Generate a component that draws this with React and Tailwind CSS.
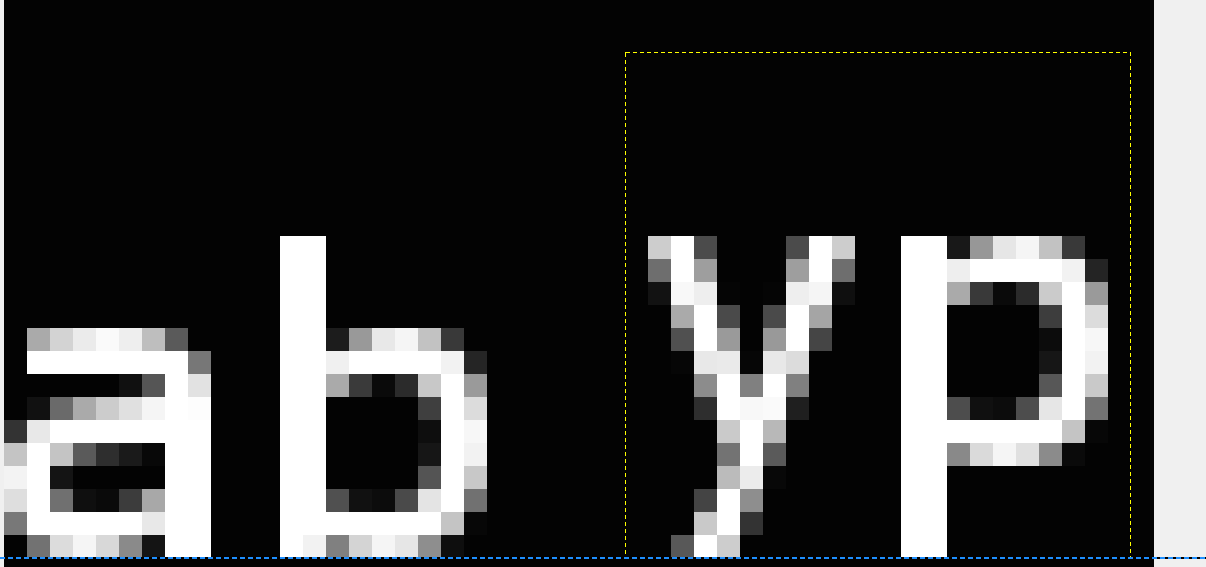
import React from "react";

const CELL = 23;

// zoomed bitmap: each glyph is a block of grey values, one cell per source pixel
const glyphs = [
  {
    col: 0,
    row: 14,
    rows: [
      [0, 170, 211, 235, 250, 238, 190, 90, 0],
      [0, 255, 255, 255, 255, 255, 255, 255, 119],
      [0, 0, 0, 0, 0, 16, 85, 255, 226],
      [0, 17, 106, 170, 204, 224, 245, 255, 253],
      [51, 232, 255, 255, 255, 255, 255, 255, 255],
      [196, 255, 196, 90, 46, 26, 8, 255, 255],
      [243, 255, 20, 0, 0, 0, 0, 255, 255],
      [222, 255, 112, 15, 10, 60, 168, 255, 255],
      [120, 255, 255, 255, 255, 255, 232, 255, 255],
      [0, 114, 220, 245, 216, 138, 20, 255, 255],
    ],
  },
  {
    col: 12,
    row: 10,
    rows: [
      [255, 255],
      [255, 255],
      [255, 255],
      [255, 255],
      [255, 255, 28, 153, 232, 245, 194, 57, 0],
      [255, 255, 240, 255, 255, 255, 255, 242, 37],
      [255, 255, 170, 58, 10, 43, 200, 255, 154],
      [255, 255, 0, 0, 0, 0, 63, 255, 220],
      [255, 255, 0, 0, 0, 0, 14, 255, 247],
      [255, 255, 0, 0, 0, 0, 22, 255, 242],
      [255, 255, 0, 0, 0, 0, 84, 255, 200],
      [255, 255, 80, 17, 12, 74, 228, 255, 113],
      [255, 255, 255, 255, 255, 255, 255, 196, 7],
      [255, 242, 128, 212, 245, 230, 142, 14, 0],
    ],
  },
  {
    col: 28,
    row: 10,
    rows: [
      [205, 255, 75, 0, 0, 0, 75, 255, 205],
      [110, 255, 158, 0, 0, 0, 158, 255, 110],
      [18, 248, 238, 5, 0, 5, 238, 245, 15],
      [0, 170, 255, 74, 0, 74, 255, 165, 0],
      [0, 80, 255, 154, 0, 153, 255, 69, 0],
      [0, 6, 232, 234, 6, 232, 220, 0, 0],
      [0, 0, 140, 255, 128, 255, 128, 0, 0],
      [0, 0, 46, 255, 248, 250, 31, 0, 0],
      [0, 0, 0, 202, 255, 184, 0, 0, 0],
      [0, 0, 0, 115, 255, 90, 0, 0, 0],
      [0, 0, 0, 187, 236, 8, 0, 0, 0],
      [0, 0, 68, 255, 142, 0, 0, 0, 0],
      [0, 0, 201, 255, 51, 0, 0, 0, 0],
      [0, 88, 255, 205, 0, 0, 0, 0, 0],
    ],
  },
  {
    col: 39,
    row: 10,
    rows: [
      [255, 255, 24, 151, 230, 245, 194, 57, 0],
      [255, 255, 238, 255, 255, 255, 255, 242, 36],
      [255, 255, 170, 57, 10, 43, 203, 255, 154],
      [255, 255, 0, 0, 0, 0, 61, 255, 220],
      [255, 255, 0, 0, 0, 0, 12, 255, 247],
      [255, 255, 0, 0, 0, 0, 22, 255, 242],
      [255, 255, 0, 0, 0, 0, 87, 255, 201],
      [255, 255, 77, 16, 12, 77, 230, 255, 115],
      [255, 255, 255, 255, 255, 255, 255, 196, 7],
      [255, 255, 137, 218, 245, 224, 139, 10, 0],
      [255, 255],
      [255, 255],
      [255, 255],
      [255, 255],
    ],
  },
];

const PixelView = () => {
  const cells = [];
  glyphs.forEach((g, gi) => {
    g.rows.forEach((line, ri) => {
      line.forEach((v, ci) => {
        if (!v) return;
        cells.push(
          <rect
            key={`${gi}-${ri}-${ci}`}
            x={(g.col + ci) * CELL}
            y={(g.row + ri) * CELL}
            width={CELL}
            height={CELL}
            fill={`rgb(${v},${v},${v})`}
          />
        );
      });
    });
  });

  return (
    <svg
      width={1150}
      height={552}
      viewBox="0 0 1150 552"
      shapeRendering="crispEdges"
      className="block"
      role="img"
      aria-label="ab yp"
    >
      {cells}
    </svg>
  );
};

const App = () => {
  return (
    <div className="relative flex h-[567px] w-[1206px] overflow-hidden bg-[#f0f0f0]">
      <div className="w-[4px] shrink-0 bg-[#f0f0f0]" />
      <div className="w-[1150px] shrink-0 bg-[#030303] pt-[6px]">
        <PixelView />
      </div>
      <div className="flex-1 bg-[#f0f0f0]" />

      {/* selection box */}
      <svg
        className="absolute left-[625px] top-[52px]"
        width={507}
        height={507}
        shapeRendering="crispEdges"
      >
        <rect
          x={0.5}
          y={0.5}
          width={505}
          height={505}
          fill="none"
          stroke="#ffff00"
          strokeWidth={1}
          strokeDasharray="4 3"
        />
      </svg>

      {/* baseline guide */}
      <div className="absolute left-0 top-[557px] h-[2px] w-full bg-black">
        <svg width={1206} height={2} className="block" shapeRendering="crispEdges">
          <line
            x1={0}
            y1={1}
            x2={1206}
            y2={1}
            stroke="#1e8fff"
            strokeWidth={2}
            strokeDasharray="5 3"
          />
        </svg>
      </div>
    </div>
  );
};

export default App;
